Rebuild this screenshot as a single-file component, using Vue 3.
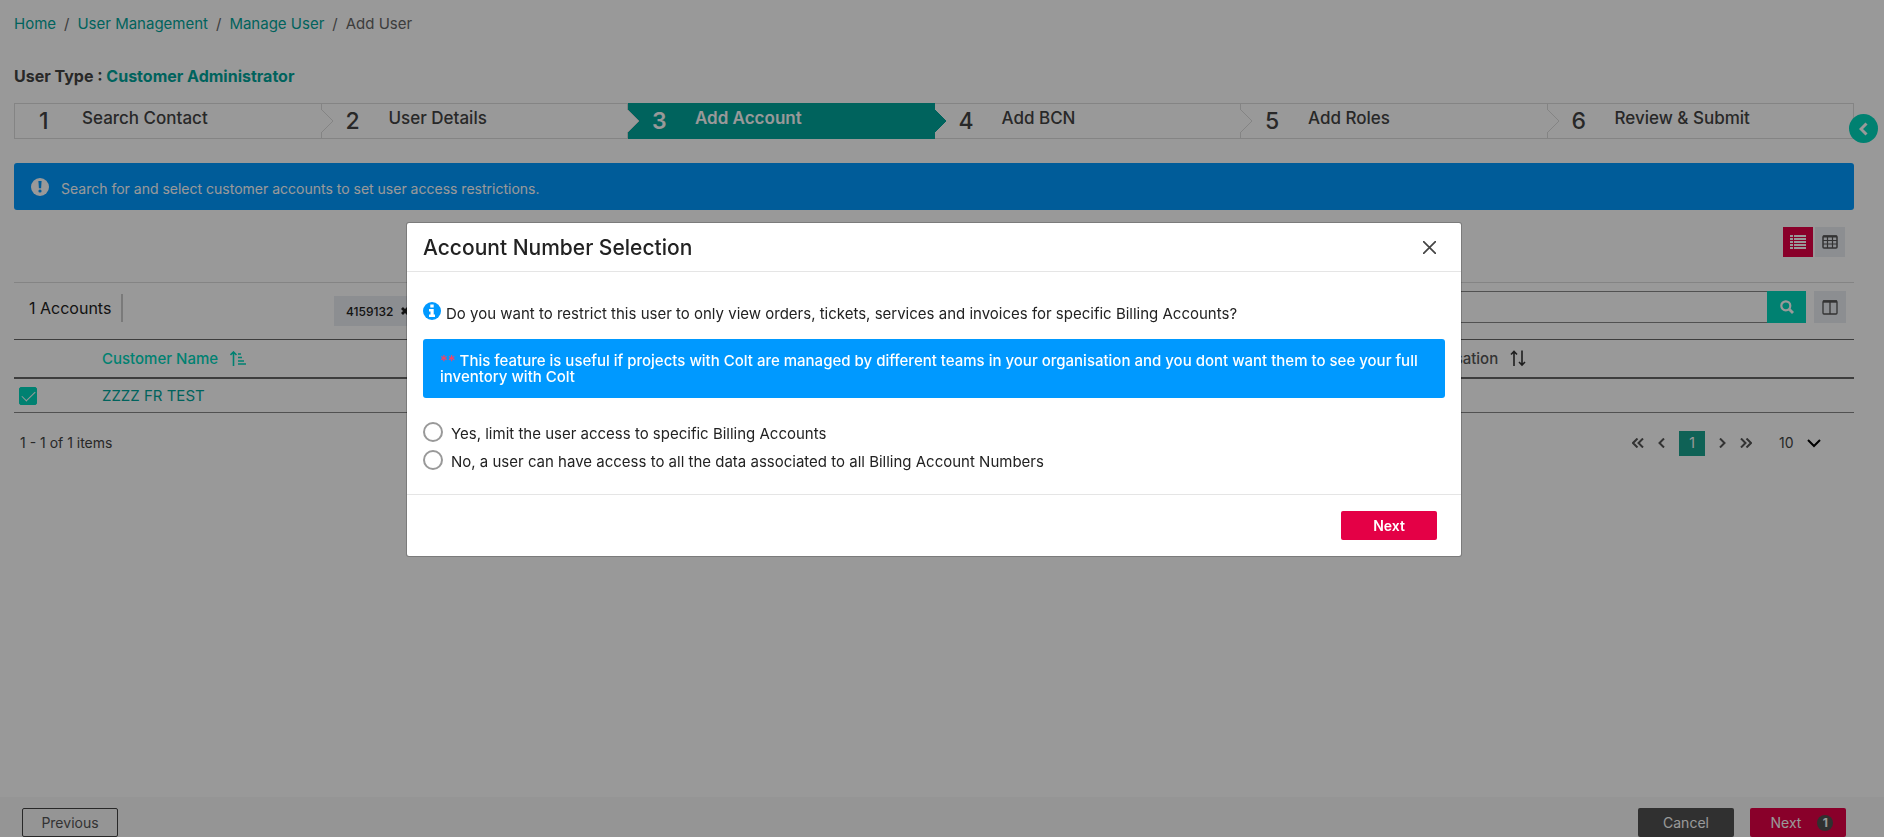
<template>
  <div class="page">
    <main class="content">
      <nav class="breadcrumb" aria-label="Breadcrumb">
        <template v-for="crumb in crumbs" :key="crumb">
          <a href="#">{{ crumb }}</a>
          <span>/</span>
        </template>
        <span>Add User</span>
      </nav>

      <h1 class="user-type">User Type : <span>Customer Administrator</span></h1>

      <ol class="steps">
        <li v-for="(step, index) in steps" :key="step" class="step" :class="{ active: index === activeStep }">
          <span class="step-number">{{ index + 1 }}</span>
          <span class="step-label">{{ step }}</span>
          <svg v-if="index < steps.length - 1" class="step-arrow" viewBox="0 0 13 24">
            <path d="M0 0 L12 12 L0 24" />
          </svg>
        </li>
      </ol>

      <div class="banner">
        <svg width="18" height="18" viewBox="0 0 18 18">
          <circle cx="9" cy="9" r="9" fill="#fff" />
          <path d="M7.4 3h3.2l-.5 7.2H7.9z" fill="#09f" />
          <circle cx="9" cy="13" r="1.6" fill="#09f" />
        </svg>
        <span class="lowered">Search for and select customer accounts to set user access restrictions.</span>
      </div>

      <div class="view-switch">
        <button type="button" class="square selected" aria-label="List view">
          <svg width="16" height="14" viewBox="0 0 16 14" fill="#fff">
            <path d="M0 0h3v2H0zM4 0h12v2H4zM0 3h3v2H0zM4 3h12v2H4zM0 6h3v2H0zM4 6h12v2H4zM0 9h3v2H0zM4 9h12v2H4zM0 12h3v2H0zM4 12h12v2H4z" />
          </svg>
        </button>
        <button type="button" class="square" aria-label="Grid view">
          <svg width="16" height="14" viewBox="0 0 16 14" fill="none" stroke="#555">
            <rect x="1" y="1" width="14" height="12" rx="1" stroke-width="1.5" />
            <path d="M1 1.5h14" stroke-width="2" />
            <path d="M1 5.5h14M1 9h14M5.5 2v11M10.5 2v11" stroke-width="1.2" />
          </svg>
        </button>
      </div>

      <div class="toolbar">
        <span class="count">1 Accounts</span>
        <span class="chip">
          4159132
          <button type="button" aria-label="Remove 4159132">
            <svg width="8" height="8" viewBox="0 0 8 8"><path d="M1 1l6 6M7 1L1 7" stroke="#222" stroke-width="2.8" /></svg>
          </button>
        </span>
        <form class="search" @submit.prevent>
          <input v-model="query" type="text" aria-label="Search accounts" />
          <button type="submit" aria-label="Search">
            <svg width="14" height="14" viewBox="0 0 14 14" fill="none" stroke="#fff">
              <circle cx="5.8" cy="5.8" r="4.5" stroke-width="2.2" />
              <path d="M9 9l4 4" stroke-width="2.8" />
            </svg>
          </button>
        </form>
        <button type="button" class="square columns" aria-label="Columns">
          <svg width="16" height="15" viewBox="0 0 16 15" fill="none" stroke="#555">
            <rect x="1" y="1" width="14" height="13" rx="1" stroke-width="1.3" />
            <path d="M1 1.5h14" stroke-width="2.4" />
            <path d="M8 2v12" stroke-width="1.3" />
          </svg>
        </button>
      </div>

      <table class="accounts">
        <thead>
          <tr>
            <th class="col-check"></th>
            <th class="sorted">
              <span class="head">Customer Name
                <svg width="17" height="15" viewBox="0 0 17 15" fill="none" stroke="currentColor" stroke-width="1.6">
                  <path d="M3.5 15V1M.5 4l3-3 3 3M8 3h3M8 6.5h4M8 10h6M8 13h8" />
                </svg>
              </span>
            </th>
            <th class="col-org">
              <span class="head">Organisation
                <svg width="16" height="17" viewBox="0 0 16 17" fill="none" stroke="#333" stroke-width="1.6">
                  <path d="M4 16V1.500M1 4.500l3-3 3 3M12 .5V15M9 12l3 3 3-3" />
                </svg>
              </span>
            </th>
          </tr>
        </thead>
        <tbody>
          <tr v-for="account in accounts" :key="account.name">
            <td><input v-model="account.selected" type="checkbox" :aria-label="account.name" /></td>
            <td><a href="#">{{ account.name }}</a></td>
            <td></td>
          </tr>
        </tbody>
      </table>

      <div class="pagination">
        <span>1 - 1 of 1 items</span>
        <div class="pager">
          <button type="button" aria-label="First page">
            <svg width="12" height="10" viewBox="0 0 12 10"><path d="M5.500 .5L1 5l4.500 4.500M11 .5L6.500 5 11 9.500" /></svg>
          </button>
          <button type="button" aria-label="Previous page">
            <svg width="12" height="10" viewBox="0 0 12 10"><path d="M8 .5L3.500 5 8 9.500" /></svg>
          </button>
          <button type="button" class="current">1</button>
          <button type="button" aria-label="Next page">
            <svg width="12" height="10" viewBox="0 0 12 10"><path d="M4 .5L8.500 5 4 9.500" /></svg>
          </button>
          <button type="button" aria-label="Last page">
            <svg width="12" height="10" viewBox="0 0 12 10"><path d="M1 .5L5.500 5 1 9.500M6.500 .5L11 5 6.500 9.500" /></svg>
          </button>
          <label class="page-size">
            <select v-model="pageSize" aria-label="Items per page">
              <option v-for="size in pageSizes" :key="size" :value="size">{{ size }}</option>
            </select>
            <svg width="14" height="9" viewBox="0 0 14 9"><path d="M1 1l6 6 6-6" /></svg>
          </label>
        </div>
      </div>
    </main>

    <footer class="actions">
      <button type="button" class="btn outline">Previous</button>
      <div class="actions-right">
        <button type="button" class="btn dark">Cancel</button>
        <button type="button" class="btn red with-badge">Next <span class="badge">1</span></button>
      </div>
    </footer>

    <button type="button" class="side-toggle" aria-label="Open panel">
      <svg width="9" height="14" viewBox="0 0 9 14"><path d="M7.500 1.500L2 7l5.500 5.500" fill="none" stroke="#fff" stroke-width="3" /></svg>
    </button>

    <div class="overlay">
      <section class="modal" role="dialog" aria-labelledby="modal-title">
        <header class="modal-header">
          <h2 id="modal-title">Account Number Selection</h2>
          <button type="button" class="close" aria-label="Close">
            <svg width="13" height="13" viewBox="0 0 13 13"><path d="M0 0l13 13M13 0L0 13" stroke="#444" stroke-width="1.7" /></svg>
          </button>
        </header>
        <div class="modal-body">
          <p class="question">
            <svg width="18" height="18" viewBox="0 0 18 18">
              <circle cx="9" cy="9" r="9" fill="#09f" />
              <path d="M7.300 2.500h3.400v3H7.300zM6 7h4.700v5.500H12V15H6v-2.500h1.500v-3H6z" fill="#fff" />
            </svg>
            Do you want to restrict this user to only view orders, tickets, services and invoices for specific Billing Accounts?
          </p>
          <p class="note">
            <span>**</span> This feature is useful if projects with Colt are managed by different teams in your organisation and you dont want them to see your full inventory with Colt
          </p>
          <label v-for="option in options" :key="option.value" class="option">
            <input v-model="restriction" type="radio" name="restriction" :value="option.value" />
            <span class="lowered">{{ option.text }}</span>
          </label>
        </div>
        <footer class="modal-footer">
          <button type="button" class="btn red strong">Next</button>
        </footer>
      </section>
    </div>
  </div>
</template>

<script setup>
import { ref } from 'vue';

const crumbs = ['Home', 'User Management', 'Manage User'];
const steps = ['Search Contact', 'User Details', 'Add Account', 'Add BCN', 'Add Roles', 'Review & Submit'];
const activeStep = 2;

const accounts = ref([{ name: 'ZZZZ FR TEST', selected: true }]);
const query = ref('');

const pageSizes = [10, 20, 50];
const pageSize = ref(10);

const restriction = ref('');
const options = [
  { value: 'yes', text: 'Yes, limit the user access to specific Billing Accounts' },
  { value: 'no', text: 'No, a user can have access to all the data associated to all Billing Account Numbers' }
];
</script>

<style>
body {
  margin: 0;
  background: #fff;
}
</style>

<style scoped>
* {
  box-sizing: border-box;
}

.page {
  display: flex;
  flex-direction: column;
  min-height: 100vh;
  font-family: Inter, "Liberation Sans", sans-serif;
  font-size: 14px;
  color: #222;
}

svg {
  display: block;
  flex: none;
}

button,
input,
select {
  font: inherit;
  color: inherit;
}

button {
  display: flex;
  align-items: center;
  justify-content: center;
  border: 0;
  padding: 0;
  background: none;
}

a {
  color: #00a59b;
  text-decoration: none;
}

.content {
  padding: 14px 30px 0 14px;
}

.breadcrumb {
  display: flex;
  gap: 8px;
  font-size: 15px;
  line-height: 20px;
  color: #666;
}

.user-type {
  margin: 32px 0 0;
  font-size: 16px;
  font-weight: 700;
  line-height: 20px;
  color: #444;
}

.user-type span {
  color: #00a59b;
}

.steps {
  display: flex;
  margin: 17px 0 24px;
  padding: 0;
  list-style: none;
  height: 36px;
  border: 1px solid #ddd;
}

.step {
  position: relative;
  display: flex;
  flex: 1;
  padding-left: 24px;
  border-right: 1px solid #ddd;
  font-weight: 500;
  color: #444;
}

.step:last-child {
  border-right: 0;
}

.step-number {
  width: 43px;
  font-size: 23px;
  line-height: 34px;
}

.step-label {
  font-size: 17px;
  line-height: 28px;
}

.step-arrow {
  position: absolute;
  z-index: 1;
  top: 5px;
  right: -13px;
  width: 13px;
  height: 24px;
  overflow: visible;
}

.step-arrow path {
  fill: #fff;
  stroke: #ddd;
}

.active {
  margin: -1px 0;
  padding-top: 1px;
  background: #00a59b;
  border-color: #00a59b;
  font-weight: 600;
  color: #fff;
}

.active .step-arrow {
  top: 6px;
}

.active .step-arrow path {
  fill: #00a59b;
  stroke: #00a59b;
}

.banner {
  display: flex;
  align-items: center;
  gap: 12px;
  height: 47px;
  padding: 0 17px;
  border-radius: 3px;
  background: #09f;
  color: #fff;
}

/* text that sits a little below the icon or radio beside it */
.lowered {
  padding-top: 3px;
}

.view-switch {
  display: flex;
  justify-content: flex-end;
  gap: 2px;
  padding: 17px 9px 25px 0;
  border-bottom: 1px solid #ddd;
}

.square {
  flex: none;
  width: 30px;
  height: 30px;
  background: #eaedf2;
}

.square.selected {
  background: #e40046;
}

.toolbar {
  display: flex;
  align-items: flex-start;
  height: 56px;
  padding: 8px 8px 0 15px;
}

.count {
  width: 94px;
  margin-top: 3px;
  border-right: 2px solid #ccc;
  font-size: 16px;
  line-height: 28px;
}

.chip {
  display: flex;
  align-items: center;
  gap: 8px;
  height: 30px;
  margin: 5px 16px 0 211px;
  padding: 0 12px;
  background: #eaedf2;
  font-size: 12px;
  font-weight: 500;
}

.search {
  display: flex;
  flex: 1;
  height: 32px;
  margin-right: 8px;
}

.search input {
  flex: 1;
  min-width: 0;
  padding: 0 10px;
  border: 1px solid #888;
  border-right: 0;
  background: #fff;
}

.search button {
  width: 39px;
  background: #00d7bd;
}

.columns {
  width: 32px;
  height: 32px;
}

.accounts {
  width: 100%;
  border-collapse: separate;
  border-spacing: 0;
  table-layout: fixed;
  font-size: 15px;
}

.accounts th {
  height: 40px;
  padding: 0;
  border-top: 1px solid #666;
  border-bottom: 2px solid #666;
  font-weight: 500;
  text-align: left;
  color: #555;
}

.accounts td {
  height: 34px;
  padding: 0;
  border-bottom: 1px solid #888;
}

.accounts .sorted {
  color: #00d7bd;
}

.col-check {
  width: 88px;
}

.col-org {
  width: 447px;
}

.head {
  display: flex;
  align-items: center;
  gap: 12px;
}

.accounts input {
  display: block;
  appearance: none;
  width: 18px;
  height: 18px;
  margin: 0 0 0 5px;
  border: 1px solid #00d7bd;
  border-radius: 2px;
}

.accounts input:checked {
  background: #00d7bd;
}

.accounts input:checked::after {
  content: "";
  display: block;
  width: 6px;
  height: 12px;
  margin: 0 auto;
  border: solid #fff;
  border-width: 0 1px 1px 0;
  transform: rotate(45deg);
}

.pagination {
  display: flex;
  align-items: center;
  justify-content: space-between;
  margin-top: 17px;
  padding: 0 33px 0 6px;
  line-height: 26px;
  color: #444;
}

.pager {
  display: flex;
  align-items: center;
  gap: 10px;
}

.pager button {
  width: 14px;
  height: 25px;
}

.pager path {
  fill: none;
  stroke: #555;
  stroke-width: 2;
}

.pager .page-size path {
  stroke: #000;
}

.pager .current {
  width: 26px;
  background: #1aa48f;
  color: #fff;
}

.page-size {
  display: flex;
  align-items: center;
  gap: 10px;
  margin-left: 16px;
}

.page-size select {
  appearance: none;
  padding: 0;
  border: 0;
  background: none;
}

.actions {
  display: flex;
  justify-content: space-between;
  height: 40px;
  margin-top: auto;
  padding: 11px 38px 0 22px;
  background: #f8f8f8;
}

.actions-right {
  display: flex;
  gap: 16px;
}

.btn {
  gap: 16px;
  width: 96px;
  height: 29px;
  border-radius: 2px;
  color: #fff;
}

.outline {
  border: 1px solid #444;
  color: #555;
}

.dark {
  background: #505050;
}

.red {
  background: #e40046;
}

.with-badge {
  padding-left: 8px;
}

.strong {
  font-weight: 600;
}

.badge {
  width: 16px;
  border-radius: 8px;
  background: #505050;
  font-size: 12px;
  font-weight: 700;
  line-height: 16px;
}

.side-toggle {
  position: absolute;
  top: 114px;
  right: 6px;
  width: 29px;
  height: 29px;
  border-radius: 50%;
  background: #00d7bd;
}

.overlay {
  position: fixed;
  z-index: 10;
  inset: 0;
  display: flex;
  align-items: flex-start;
  justify-content: center;
  padding: 222px 16px 0 0;
  background: rgba(0, 0, 0, 0.4);
}

.modal {
  width: 1056px;
  max-width: 100%;
  border: 1px solid rgba(0, 0, 0, 0.2);
  border-radius: 3px;
  background: #fff;
  background-clip: padding-box;
}

.modal-header {
  display: flex;
  align-items: center;
  justify-content: space-between;
  height: 49px;
  padding: 0 20px 0 16px;
  border-bottom: 1px solid #e5e5e5;
}

.modal-header h2 {
  margin: 0;
  font-size: 21px;
  font-weight: 500;
}

.close {
  width: 24px;
  height: 24px;
}

.modal-body {
  padding: 30px 16px 20px;
  font-size: 15px;
}

.question {
  display: flex;
  gap: 5px;
  margin: 0 0 13px;
  line-height: 24px;
}

.note {
  margin: 0 0 20px;
  padding: 14px 17px 13px;
  border-radius: 3px;
  background: #09f;
  font-weight: 500;
  line-height: 16px;
  color: #fff;
}

.note span {
  color: #ff4060;
}

.option {
  display: flex;
  align-items: center;
  gap: 8px;
  height: 28px;
}

.option input {
  appearance: none;
  width: 20px;
  height: 20px;
  margin: 0;
  border: 2px solid #999;
  border-radius: 50%;
}

.option input:checked {
  border: 6px solid #00a59b;
}

.modal-footer {
  display: flex;
  justify-content: flex-end;
  padding: 16px 24px 16px 0;
  border-top: 1px solid #e5e5e5;
}
</style>
